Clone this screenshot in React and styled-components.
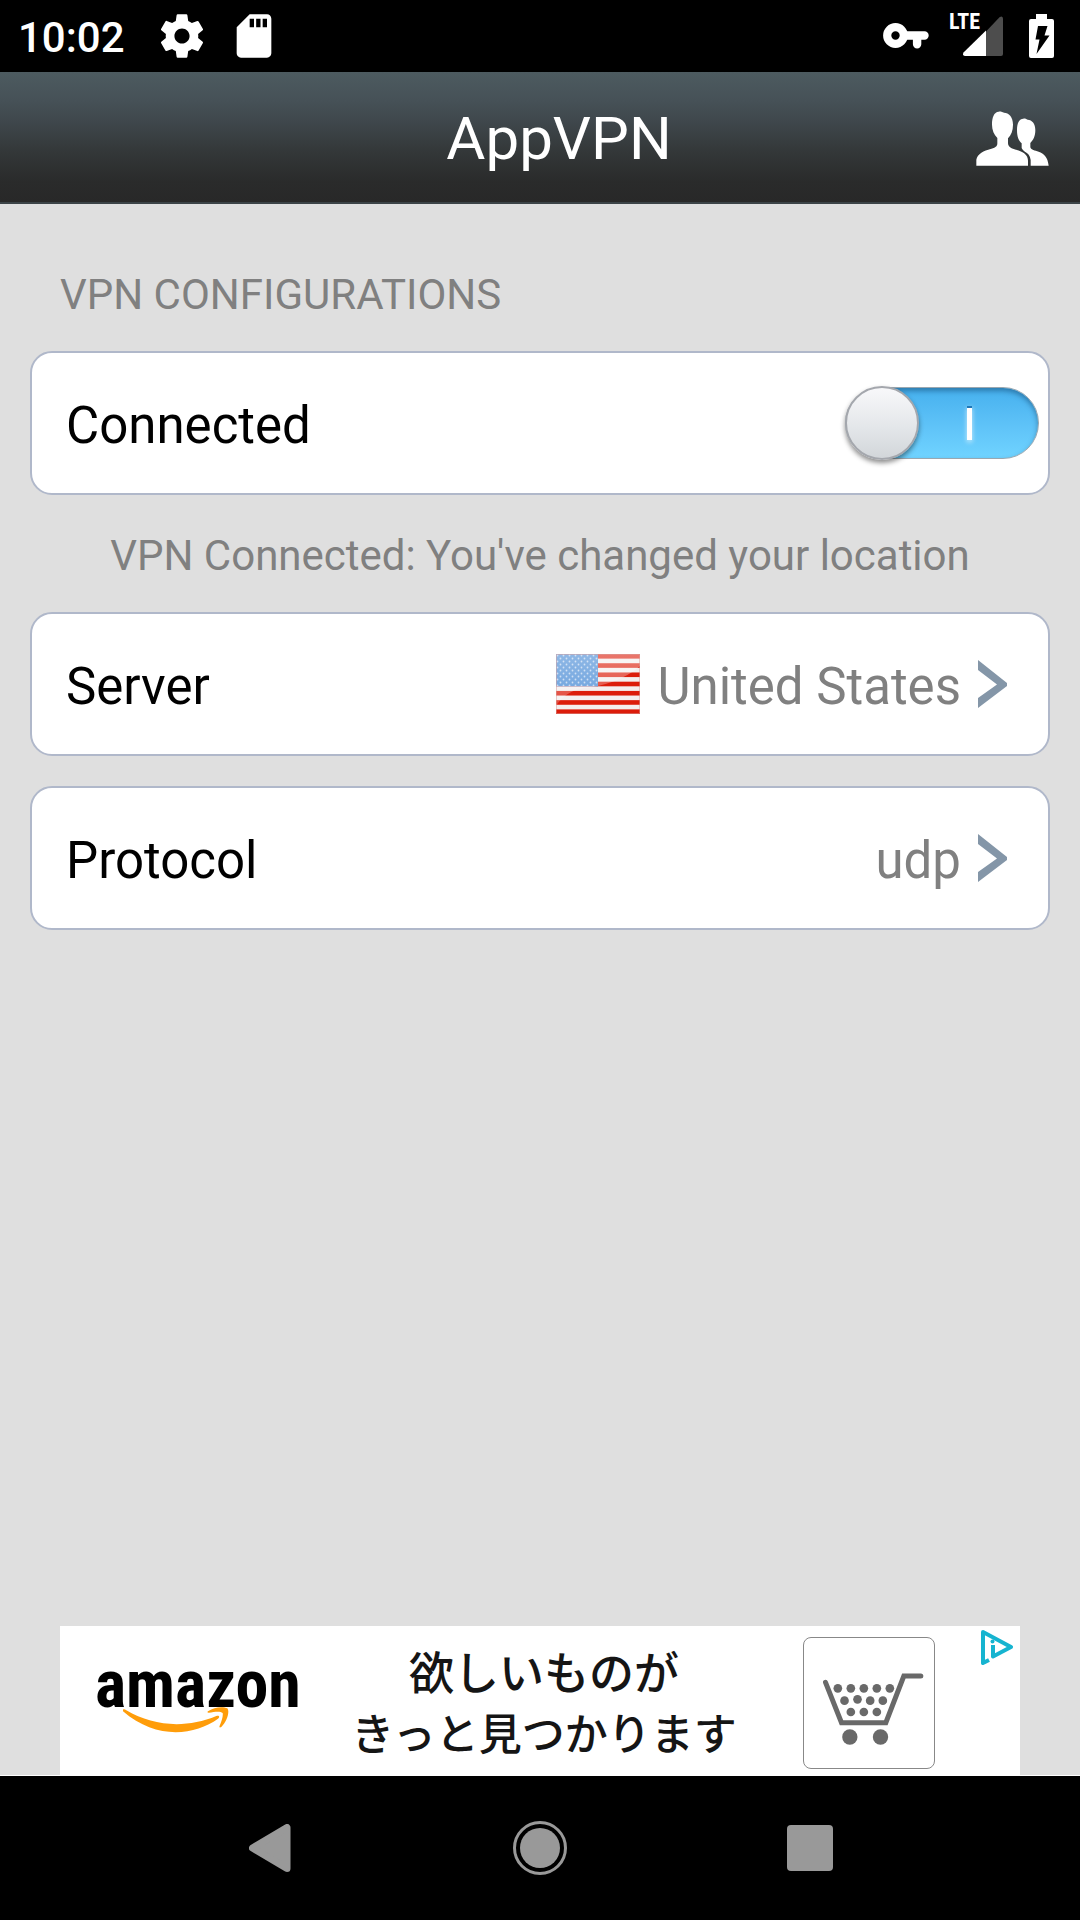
import React, { useState } from 'react';
import styled, { createGlobalStyle } from 'styled-components';

const GlobalStyle = createGlobalStyle`
    *,
    *::before,
    *::after {
        box-sizing: border-box;
    }

    body {
        margin: 0;
        background: #dfdfdf;
        font-family: Roboto, "Noto Sans CJK JP", sans-serif;
    }

    svg {
        display: block;
    }
`;

const Page = styled.div`
    display: flex;
    flex-direction: column;
    min-height: 100vh;
`;

const StatusBar = styled.div`
    display: flex;
    justify-content: space-between;
    align-items: center;
    height: 72px;
    padding: 0 26px 0 18px;
    background: #000;
    color: #fff;
`;

const StatusGroup = styled.div`
    display: flex;
    align-items: center;
    gap: ${({ $gap }) => $gap}px;
`;

const Clock = styled.time`
    padding-top: 4px;
    margin-right: 11px;
    font-size: 42px;
    line-height: 48px;
    font-weight: 500;
`;

const Signal = styled.div`
    position: relative;
    padding-left: 8px;
`;

const SignalLabel = styled.span`
    position: absolute;
    top: -6px;
    left: -6px;
    font-family: "Roboto Condensed", Roboto, sans-serif;
    font-size: 22px;
    line-height: 24px;
    font-weight: 700;
`;

const Header = styled.header`
    display: grid;
    grid-template-columns: 1fr auto 1fr;
    align-items: center;
    height: 132px;
    padding: 2px 31px 0 69px;
    border-bottom: 2px solid #3b4347;
    background: linear-gradient(#4d5b60 0%, #465157 22%, #3f474c 38%, #333738 62%, #2a2b2b 84%, #282828 100%);
`;

const Title = styled.h1`
    grid-column: 2;
    margin: 0;
    padding-top: 2px;
    color: #fff;
    font-size: 60px;
    line-height: 72px;
    font-weight: 400;
`;

const IconButton = styled.button`
    justify-self: ${({ $align }) => $align || 'center'};
    padding: 0;
    border: 0;
    background: none;
    cursor: pointer;
`;

const Content = styled.main`
    flex: 1;
    display: flex;
    flex-direction: column;
    padding: 67px 30px 0;
    border-bottom: 1px solid #fff;
`;

const SectionTitle = styled.h2`
    margin: 0 0 32px;
    padding-left: 30px;
    color: #808080;
    font-size: 42px;
    line-height: 48px;
    font-weight: 400;
`;

const Hint = styled.p`
    margin: 0;
    padding: 37px 0 32px;
    color: #808080;
    font-size: 42px;
    line-height: 48px;
    text-align: center;
`;

const Card = styled.div`
    display: flex;
    justify-content: space-between;
    align-items: center;
    width: 100%;
    height: 144px;
    padding: 0 ${({ $end }) => $end || 40}px 0 34px;
    border: 2px solid #b0b8ca;
    border-radius: 22px;
    background: #fff;
    color: #000;
    font-family: inherit;
    font-size: 51px;
    line-height: 60px;
    cursor: pointer;
`;

const CardList = styled.div`
    display: flex;
    flex-direction: column;
    gap: 30px;
`;

const CardText = styled.span`
    padding-top: 6px;
    color: ${({ $muted }) => ($muted ? '#808080' : '#000')};
`;

const CardValue = styled.span`
    display: flex;
    align-items: center;
    gap: 17px;
`;

const Switch = styled.input`
    appearance: none;
    display: flex;
    align-items: center;
    justify-content: space-between;
    width: 194px;
    height: 72px;
    margin: 0;
    padding-right: 66px;
    border: 1px solid #9aa7b0;
    border-radius: 36px;
    background: ${({ checked }) => (checked ? 'linear-gradient(#46b0ee, #5fc3f8 55%, #70d3ff)' : '#c9ced2')};
    box-shadow: inset 0 3px 5px rgba(20, 70, 110, 0.5);
    cursor: pointer;

    &::before {
        content: '';
        width: 74px;
        height: 74px;
        margin-left: -1px;
        border: 2px solid #a4a7ad;
        border-radius: 50%;
        background: linear-gradient(#f8f8fa, #e4e7ea 55%, #d2d6da);
        box-shadow: 0 3px 5px rgba(0, 0, 0, 0.45);
    }

    &::after {
        content: '';
        width: 5px;
        height: 34px;
        border-top: 2px solid #1f77b8;
        background: #fff;
        box-shadow: 0 2px 5px rgba(255, 255, 255, 0.7);
    }
`;

const AdBanner = styled.a`
    position: relative;
    display: grid;
    grid-template-columns: 200px 1fr 132px;
    align-items: center;
    height: 149px;
    margin: auto 30px 0;
    padding: 0 85px 0 35px;
    background: #fff;
    color: #151515;
    text-decoration: none;
`;

const Brand = styled.span`
    display: flex;
    flex-direction: column;
    padding-bottom: 6px;
    color: #000;
    font-family: "Roboto Condensed", Roboto, sans-serif;
    font-size: 66px;
    line-height: 44px;
    font-weight: 700;
`;

const Slogan = styled.span`
    display: flex;
    flex-direction: column;
    align-items: center;
    padding-right: 10px;
    font-family: "Noto Sans CJK JP", sans-serif;
    font-size: 43px;
    line-height: 60px;
    font-weight: 500;
    white-space: nowrap;
`;

const SloganLead = styled.span`
    font-size: 45px;
`;

const CartFrame = styled.span`
    display: block;
    align-self: end;
    height: 132px;
    margin-bottom: 6px;
    border: 1px solid #888;
    border-radius: 8px;
`;

const AdBadge = styled.span`
    position: absolute;
    top: 3px;
    right: 6px;
`;

const NavBar = styled.nav`
    display: grid;
    grid-template-columns: repeat(3, 1fr);
    align-items: center;
    height: 144px;
    padding: 0 12.5%;
    background: #000;
`;

const GearIcon = () => (
    <svg width="52" height="52" viewBox="0 0 24 24" fill="#fff">
        <path d="M19.43 12.98c.04-.32.07-.64.07-.98s-.03-.66-.07-.98l2.11-1.65c.19-.15.24-.42.12-.64l-2-3.46c-.12-.22-.39-.3-.61-.22l-2.49 1c-.52-.4-1.08-.73-1.69-.98l-.38-2.65C14.46 2.18 14.25 2 14 2h-4c-.25 0-.46.18-.49.42l-.38 2.65c-.61.25-1.17.59-1.69.98l-2.49-1c-.23-.09-.49 0-.61.22l-2 3.46c-.13.22-.07.49.12.64l2.11 1.65c-.04.32-.07.65-.07.98s.03.66.07.98l-2.11 1.65c-.19.15-.24.42-.12.64l2 3.46c.12.22.39.3.61.22l2.49-1c.52.4 1.08.73 1.69.98l.38 2.65c.03.24.24.42.49.42h4c.25 0 .46-.18.49-.42l.38-2.65c.61-.25 1.17-.59 1.69-.98l2.49 1c.23.09.49 0 .61-.22l2-3.46c.12-.22.07-.49-.12-.64l-2.11-1.65zM12 15.5c-1.93 0-3.5-1.57-3.5-3.5s1.57-3.5 3.5-3.5 3.5 1.57 3.5 3.5-1.57 3.5-3.5 3.5z" />
    </svg>
);

const SdCardIcon = () => (
    <svg width="52" height="52" viewBox="0 0 24 24" fill="#fff">
        <path d="M18 2h-8L4.02 8 4 20c0 1.100.9 2 2 2h12c1.100 0 2-.9 2-2V4c0-1.100-.9-2-2-2zm-6 6h-2V4h2v4zm3 0h-2V4h2v4zm3 0h-2V4h2v4z" />
    </svg>
);

const KeyIcon = () => (
    <svg width="46" height="26" viewBox="0 0 46 26">
        <circle cx="12.500" cy="12.500" r="8.300" fill="none" stroke="#fff" strokeWidth="8.200" />
        <path d="M22 8.300h19.500a4.200 4.200 0 0 1 0 8.400h-3.200v4.500a4 4 0 0 1-8.400 0v-4.500H22z" fill="#fff" />
    </svg>
);

const SignalIcon = () => (
    <svg width="40" height="40" viewBox="0 0 40 40">
        <path d="M23 15.500L36.500 1.200Q40-1 40 3v35q0 2-2 2H23z" fill="#4d4d4d" />
        <path d="M23 14.500V40H2q-3-.5-1.500-3.500z" fill="#fff" />
    </svg>
);

const BatteryIcon = () => (
    <svg width="25" height="44" viewBox="0 0 25 44">
        <path d="M7 0h11v5h5q2 0 2 2v35q0 2-2 2H2q-2 0-2-2V7q0-2 2-2h5z" fill="#fff" />
        <path d="M9 12h9.500l-3 9.500h5L7.500 40l3-14.500h-4z" fill="#000" />
    </svg>
);

const PeopleIcon = () => (
    <svg width="73" height="55" viewBox="348 331 219 165" fill="#fff">
        <path d="M349 495v-18c3-17 23-27 43-32 14-4 20-7 20-17v-16c-10-10-16-24-16-40 0-22 6-38 20-39 5-2 11 1 16 3 14 0 27 12 27 36 0 18-6 32-15 41v15c1 12 11 16 24 19 22 6 36 15 36 33v15z" />
        <path d="M512 495v-17c-2-13-8-20-16-24-6-4-9-8-11-12v-14c-9-8-14-20-14-40 0-22 7-34 19-34 4-1 8 1 13 3 13 1 23 11 23 31 0 18-6 30-15 39v13c3 8 13 10 25 13 16 6 27 15 30 42z" />
    </svg>
);

const FlagIcon = () => (
    <svg width="84" height="60" viewBox="0 0 84 60">
        <defs>
            <linearGradient id="gloss" x1="0" y1="0" x2="0" y2="1">
                <stop offset="0" stopColor="#fff" stopOpacity="0.4" />
                <stop offset="1" stopColor="#fff" stopOpacity="0.2" />
            </linearGradient>
            <pattern id="stars" width="6" height="6" patternUnits="userSpaceOnUse">
                <circle cx="1.500" cy="1.500" r="0.900" fill="#b9d2ef" />
                <circle cx="4.500" cy="4.500" r="0.900" fill="#b9d2ef" />
            </pattern>
        </defs>
        <rect width="84" height="60" fill="#f4eeee" />
        {[0, 1, 2, 3, 4, 5, 6].map((i) => (
            <rect key={i} y={i * 9.23} width="84" height="4.620" fill="#dc1c0a" />
        ))}
        <rect width="42" height="32.300" fill="#4488d4" />
        <rect width="42" height="32.300" fill="url(#stars)" />
        <path d="M0 0h84v12C68 26 48 32 28 34 14 36 5 44 0 52z" fill="url(#gloss)" />
        <rect x="0.500" y="0.500" width="83" height="59" fill="none" stroke="#d8a09c" strokeOpacity="0.5" />
    </svg>
);

const ChevronIcon = () => (
    <svg width="30" height="48" viewBox="0 0 30 48">
        <path d="M0 0l29 23v3L0 48V38l19-13.500L0 10z" fill="#8496a8" />
    </svg>
);

const SmileIcon = () => (
    <svg width="200" height="26" viewBox="138 262 600 78" fill="#ff9d0a">
        <path d="M222 270c2-3 6-1 10 2 80 48 180 55 270 17 8-3 12 3 5 8-70 50-185 65-285-22z" />
        <path d="M477 275c20-14 45-15 58-9 8 9-1 40-18 56-5 3-7 1-5-4 6-14 11-30 9-38-8-7-25-3-42-1-4 0-5-2-2-4z" />
    </svg>
);

const cartDots = [
    [172, 232], [211, 232], [250, 232], [289, 232], [328, 232],
    [192, 269], [231, 265], [269, 269], [307, 269],
    [211, 303], [250, 303], [289, 303],
];

const CartIcon = () => (
    <svg width="100%" height="100%" viewBox="71 81 389 390" fill="#696969">
        <path d="M135 214l48 121h133l54-140h51" fill="none" stroke="#696969" strokeWidth="15" strokeLinecap="round" />
        {cartDots.map(([x, y]) => (
            <circle key={`${x}-${y}`} cx={x} cy={y} r="13" />
        ))}
        <circle cx="208" cy="378" r="23" />
        <circle cx="300" cy="378" r="23" />
    </svg>
);

const AdChoicesIcon = () => (
    <svg width="34" height="36" viewBox="0 0 34 36" fill="none" stroke="#16b4d0" strokeWidth="4">
        <path d="M9 31l-6 3V3l28 15-18 9.500V16" strokeLinejoin="round" />
        <circle cx="12.500" cy="12.500" r="2" fill="#16b4d0" stroke="none" />
    </svg>
);

const BackIcon = () => (
    <svg width="42" height="48" viewBox="0 0 42 48">
        <path d="M38 3.500v41L3.500 24z" fill="#999" stroke="#999" strokeWidth="7" strokeLinejoin="round" />
    </svg>
);

const HomeIcon = () => (
    <svg width="54" height="54" viewBox="0 0 54 54">
        <circle cx="27" cy="27" r="25.500" fill="none" stroke="#999" strokeWidth="3" />
        <circle cx="27" cy="27" r="20" fill="#999" />
    </svg>
);

const RecentsIcon = () => (
    <svg width="46" height="46" viewBox="0 0 46 46">
        <rect width="46" height="46" rx="4" fill="#999" />
    </svg>
);

const App = () => {
    const [connected, setConnected] = useState(true);

    return (
        <Page>
            <GlobalStyle />
            <StatusBar>
                <StatusGroup $gap={20}>
                    <Clock>10:02</Clock>
                    <GearIcon />
                    <SdCardIcon />
                </StatusGroup>
                <StatusGroup $gap={26}>
                    <KeyIcon />
                    <Signal>
                        <SignalLabel>LTE</SignalLabel>
                        <SignalIcon />
                    </Signal>
                    <BatteryIcon />
                </StatusGroup>
            </StatusBar>

            <Header>
                <Title>AppVPN</Title>
                <IconButton $align="end" aria-label="Account">
                    <PeopleIcon />
                </IconButton>
            </Header>

            <Content>
                <SectionTitle>VPN CONFIGURATIONS</SectionTitle>
                <Card as="label" htmlFor="vpn" $end={9}>
                    <CardText>Connected</CardText>
                    <Switch
                        id="vpn"
                        type="checkbox"
                        role="switch"
                        checked={connected}
                        onChange={(e) => setConnected(e.target.checked)}
                    />
                </Card>
                <Hint>VPN Connected: You've changed your location</Hint>
                <CardList>
                    <Card as="button">
                        <CardText>Server</CardText>
                        <CardValue>
                            <FlagIcon />
                            <CardText $muted>United States</CardText>
                            <ChevronIcon />
                        </CardValue>
                    </Card>
                    <Card as="button">
                        <CardText>Protocol</CardText>
                        <CardValue>
                            <CardText $muted>udp</CardText>
                            <ChevronIcon />
                        </CardValue>
                    </Card>
                </CardList>

                <AdBanner href="#">
                    <Brand>
                        amazon
                        <SmileIcon />
                    </Brand>
                    <Slogan>
                        <SloganLead>欲しいものが</SloganLead>
                        <span>きっと見つかります</span>
                    </Slogan>
                    <CartFrame>
                        <CartIcon />
                    </CartFrame>
                    <AdBadge>
                        <AdChoicesIcon />
                    </AdBadge>
                </AdBanner>
            </Content>

            <NavBar>
                <IconButton aria-label="Back">
                    <BackIcon />
                </IconButton>
                <IconButton aria-label="Home">
                    <HomeIcon />
                </IconButton>
                <IconButton aria-label="Recent apps">
                    <RecentsIcon />
                </IconButton>
            </NavBar>
        </Page>
    );
};

export default App;
